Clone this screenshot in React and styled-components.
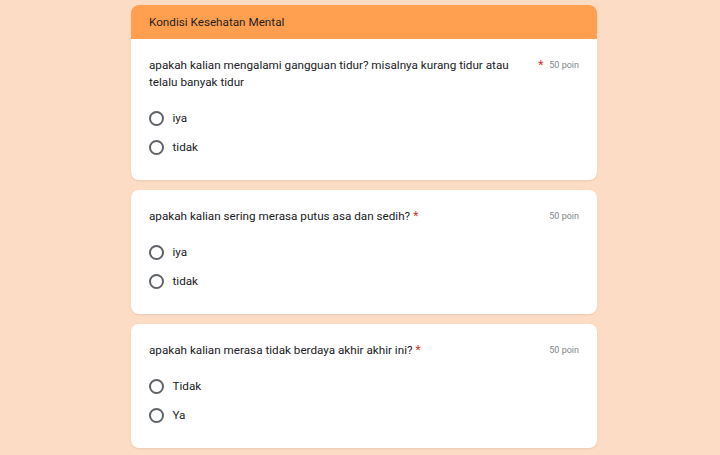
import React from 'react';
import styled, { createGlobalStyle } from 'styled-components';

const GlobalStyle = createGlobalStyle`
  html, body {
    margin: 0;
    padding: 0;
    background: #fddcc5;
  }
  body {
    font-family: Roboto, 'Noto Sans', Arial, sans-serif;
    color: #202124;
  }
`;

const Page = styled.div`
  display: flex;
  flex-direction: column;
  align-items: center;
  gap: 10px;
  padding: 5px 0 20px 8px;
  min-height: 455px;
  box-sizing: border-box;
`;

const Card = styled.div`
  width: 466px;
  box-sizing: border-box;
  background: #fff;
  border-radius: 8px;
  box-shadow: 0 1px 2px rgba(0, 0, 0, 0.08);
  overflow: hidden;
`;

const SectionHeader = styled.div`
  height: 34px;
  display: flex;
  align-items: center;
  padding: 0 18px;
  background: #ff9f4f;
  color: #1f1f1f;
  font-size: 11.7px;
  line-height: 17px;
`;

const Body = styled.div`
  padding: 18px 18px 24px;
`;

const QuestionHead = styled.div`
  display: flex;
  align-items: flex-start;
  margin-bottom: 19px;
`;

const Title = styled.div`
  min-width: 0;
  font-size: 11.7px;
  line-height: 17px;
  color: #202124;
`;

const Required = styled.span`
  color: #d93025;
  font-size: 12px;
  line-height: 17px;
  padding-left: 3px;
  flex-shrink: 0;
`;

const Points = styled.div`
  margin-left: auto;
  padding-left: 6px;
  flex-shrink: 0;
  font-size: 9px;
  font-weight: 400;
  line-height: 17px;
  color: #80868b;
  white-space: nowrap;
`;

const Options = styled.div`
  display: flex;
  flex-direction: column;
  gap: 12px;
`;

const Option = styled.label`
  display: flex;
  align-items: center;
  gap: 9px;
  font-size: 11.7px;
  line-height: 17px;
  color: #202124;
`;

const Radio = styled.span`
  width: 15px;
  height: 15px;
  box-sizing: border-box;
  border: 2px solid #5f6368;
  border-radius: 50%;
  flex-shrink: 0;
  margin-left: -0.5px;
`;

const questions = [
  {
    title: 'apakah kalian mengalami gangguan tidur? misalnya kurang tidur atau telalu banyak tidur',
    options: ['iya', 'tidak'],
  },
  {
    title: 'apakah kalian sering merasa putus asa dan sedih?',
    options: ['iya', 'tidak'],
  },
  {
    title: 'apakah kalian merasa tidak berdaya akhir akhir ini?',
    options: ['Tidak', 'Ya'],
  },
];

function Question({ title, options }) {
  return (
    <Body>
      <QuestionHead>
        <Title>{title}</Title>
        <Required>*</Required>
        <Points>50 poin</Points>
      </QuestionHead>
      <Options>
        {options.map((o) => (
          <Option key={o}>
            <Radio />
            {o}
          </Option>
        ))}
      </Options>
    </Body>
  );
}

export default function App() {
  return (
    <>
      <GlobalStyle />
      <Page>
        {questions.map((q, i) => (
          <Card key={i}>
            {i === 0 && <SectionHeader>Kondisi Kesehatan Mental</SectionHeader>}
            <Question {...q} />
          </Card>
        ))}
      </Page>
    </>
  );
}
